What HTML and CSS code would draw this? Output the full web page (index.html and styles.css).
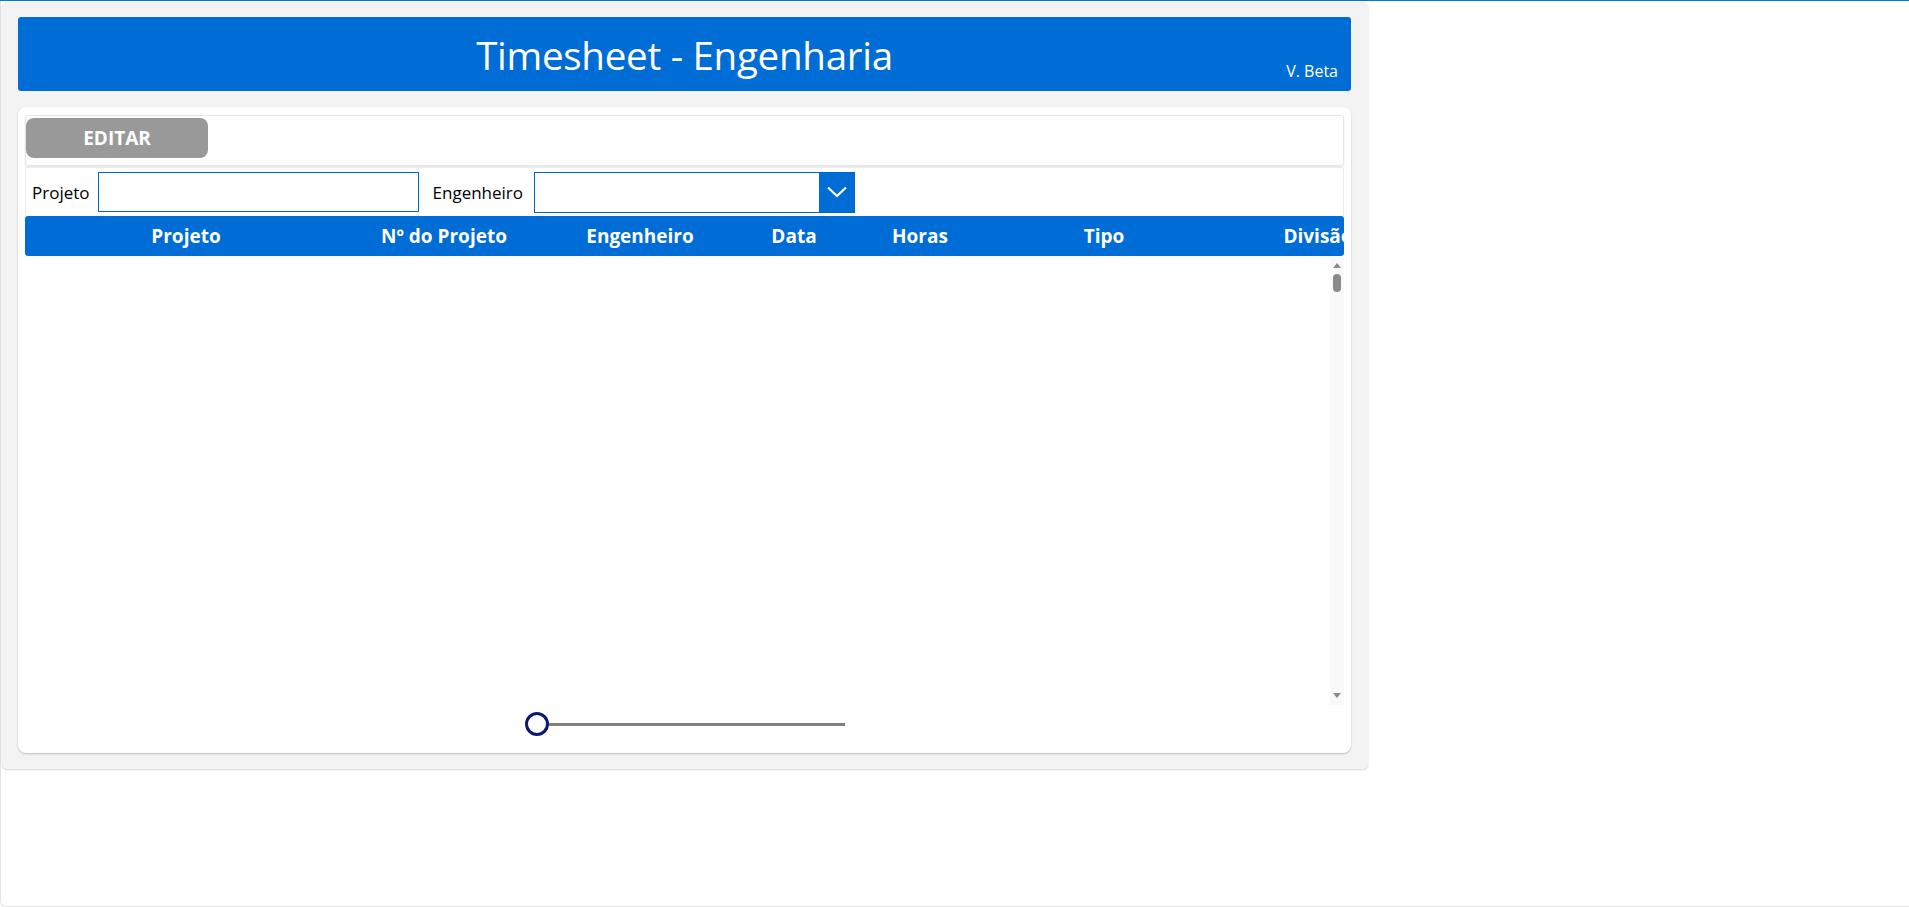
FILE: index.html
```html
<!DOCTYPE html>
<html lang="pt">
<head>
<meta charset="utf-8">
<title>Timesheet - Engenharia</title>
<link rel="stylesheet" href="styles.css">
</head>
<body>
<div class="topline"></div>
<div class="frame">
  <div class="panel">
    <header class="titlebar">
      <h1 class="title">Timesheet - Engenharia</h1>
      <span class="version">V. Beta</span>
    </header>
    <section class="card">
      <div class="toolbar">
        <button class="btn-edit" type="button">EDITAR</button>
      </div>
      <div class="filters">
        <label class="flabel">Projeto</label>
        <input class="finput" type="text">
        <label class="flabel flabel-eng">Engenheiro</label>
        <div class="dropdown">
          <div class="dd-field"></div>
          <div class="dd-btn">
            <svg width="20" height="12" viewBox="0 0 20 12"><path d="M1 1.5 L10 10 L19 1.5" fill="none" stroke="#fff" stroke-width="2.2"/></svg>
          </div>
        </div>
      </div>
      <div class="thead">
        <div class="th c1">Projeto</div>
        <div class="th c2">Nº do Projeto</div>
        <div class="th c3">Engenheiro</div>
        <div class="th c4">Data</div>
        <div class="th c5">Horas</div>
        <div class="th c6">Tipo</div>
        <div class="th c7">Divisão</div>
      </div>
      <div class="tbody">
        <div class="rows"></div>
        <div class="scrollbar">
          <span class="arrow-up"></span>
          <span class="thumb"></span>
          <span class="spacer"></span>
          <span class="arrow-down"></span>
        </div>
      </div>
      <div class="slider-row">
        <div class="slider">
          <span class="knob"></span>
          <span class="track"></span>
        </div>
      </div>
    </section>
  </div>
</div>
</body>
</html>
```

FILE: styles.css
```css
* { box-sizing: border-box; }
html, body { margin: 0; padding: 0; background: #ffffff; }
body {
  font-family: "Open Sans", "Noto Sans", "Liberation Sans", sans-serif;
  color: #000;
  width: 1909px;
  height: 907px;
  overflow: hidden;
}
.topline { height: 1px; background: #0078d4; }
.frame {
  height: 906px;
  border-left: 1px solid #e3e3e3;
  border-bottom: 1px solid #e3e3e3;
  border-bottom-left-radius: 6px;
  padding: 1px 0 0 1px;
}
.panel {
  width: 1366px;
  height: 767px;
  background: #f3f3f3;
  border-radius: 5px;
  box-shadow: 0 1px 2px rgba(0,0,0,0.18);
  padding: 15px 17px 16px 16px;
  display: flex;
  flex-direction: column;
  gap: 16px;
}
.titlebar {
  position: relative;
  height: 74px;
  flex: none;
  background: #006cd5;
  border-radius: 3px;
  display: flex;
  align-items: center;
  justify-content: center;
}
.title {
  margin: 0;
  font-weight: 400;
  font-size: 38.6px;
  color: #fff;
  letter-spacing: -0.3px;
  line-height: 1;
  padding-top: 2px;
}
.version {
  position: absolute;
  right: 13px;
  bottom: 9px;
  color: #fff;
  font-size: 16px;
}
.card {
  flex: 1;
  background: #fff;
  border-radius: 8px;
  box-shadow: 0 1px 2px rgba(0,0,0,0.22);
  padding: 8px 7px 0 7px;
  display: flex;
  flex-direction: column;
}
.toolbar {
  height: 51px;
  flex: none;
  border: 1px solid #e6e6e6;
  border-radius: 3px;
  box-shadow: 0 1px 2px rgba(0,0,0,0.12);
  padding: 2px 0 0 0;
  display: flex;
  align-items: flex-start;
}
.btn-edit {
  width: 182px;
  height: 40px;
  border: none;
  border-radius: 8px;
  background: #999999;
  color: #fff;
  font-family: inherit;
  font-weight: 700;
  font-size: 19px;
  padding: 0;
  cursor: pointer;
}
.filters {
  height: 49px;
  flex: none;
  margin-top: 1px;
  border: 1px solid #ececec;
  border-bottom: none;
  border-radius: 3px 3px 0 0;
  display: flex;
  align-items: center;
  padding: 0 0 0 6px;
}
.flabel { font-size: 17px; line-height: 1; }
.finput {
  margin-left: 8px;
  width: 321px;
  height: 40px;
  border: 1px solid #0067c8;
  border-radius: 0;
  outline: none;
  padding: 0 6px;
  font-family: inherit;
  font-size: 16px;
}
.flabel-eng { margin-left: 14px; }
.dropdown {
  margin-left: 11px;
  width: 321px;
  height: 41px;
  display: flex;
  border: 1px solid #0067c8;
}
.dd-field { flex: 1; background: #fff; }
.dd-btn {
  width: 35px;
  background: #006cd5;
  display: flex;
  align-items: center;
  justify-content: center;
}
.thead {
  height: 40px;
  flex: none;
  background: #006cd5;
  border-radius: 3px;
  display: grid;
  grid-template-columns: 322px 194px 198px 110px 142px 226px 202px;
  overflow: hidden;
  align-items: center;
}
.th {
  color: #fff;
  font-weight: 700;
  font-size: 19px;
  text-align: center;
  white-space: nowrap;
}
.tbody {
  height: 449px;
  flex: none;
  display: flex;
}
.rows { flex: 1; }
.scrollbar {
  width: 14px;
  margin-top: 2px;
  background: #f9f9f9;
  display: flex;
  flex-direction: column;
  align-items: center;
  padding: 5px 0 7px;
}
.arrow-up {
  width: 0; height: 0;
  border-left: 4px solid transparent;
  border-right: 4px solid transparent;
  border-bottom: 5px solid #8a8a8a;
}
.thumb {
  margin-top: 6px;
  width: 8px;
  height: 18px;
  border-radius: 4px;
  background: #8a8a8a;
}
.spacer { flex: 1; }
.arrow-down {
  width: 0; height: 0;
  border-left: 4px solid transparent;
  border-right: 4px solid transparent;
  border-top: 5px solid #8a8a8a;
}
.slider-row {
  flex: 1;
  display: flex;
  justify-content: center;
  padding-top: 7px;
}
.slider {
  width: 320px;
  height: 24px;
  position: relative;
  display: flex;
  align-items: center;
}
.knob {
  position: relative;
  z-index: 1;
  width: 24px;
  height: 24px;
  border-radius: 50%;
  border: 3px solid #0a1a6e;
  background: #fff;
  flex: none;
}
.track {
  flex: 1;
  height: 3px;
  background: #808080;
}
```
